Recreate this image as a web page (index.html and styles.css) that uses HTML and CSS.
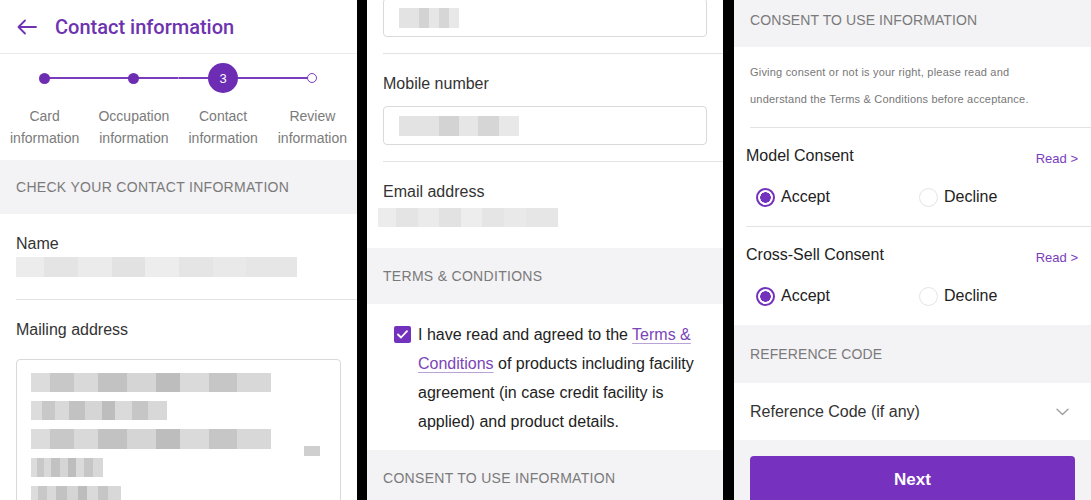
FILE: index.html
```html
<!DOCTYPE html>
<html lang="en">
<head>
    <meta charset="UTF-8">
    <meta name="viewport" content="width=device-width, initial-scale=1.0">
    <title>Contact information</title>
    <link rel="stylesheet" href="styles.css">
</head>
<body>
    <!-- screen 1 -->
    <section class="panel">
        <header class="topbar">
            <svg class="back" width="20" height="16" viewBox="0 0 20 16">
                <path d="M19 8H2M8 1.5L1.5 8L8 14.5" fill="none" stroke="#6d33b0" stroke-width="1.8" stroke-linecap="round" stroke-linejoin="round"/>
            </svg>
            <h1>Contact information</h1>
        </header>

        <div class="stepper">
            <div class="step first done">
                <div class="rail"><span class="dot"></span></div>
                <div class="step-label">Card<br>information</div>
            </div>
            <div class="step done">
                <div class="rail"><span class="dot"></span></div>
                <div class="step-label">Occupation<br>information</div>
            </div>
            <div class="step current">
                <div class="rail"><span class="num">3</span></div>
                <div class="step-label">Contact<br>information</div>
            </div>
            <div class="step last">
                <div class="rail"><span class="dot empty"></span></div>
                <div class="step-label">Review<br>information</div>
            </div>
        </div>

        <div class="section-head">CHECK YOUR CONTACT INFORMATION</div>

        <div class="field name-field">
            <div class="label">Name</div>
            <div class="mosaic light name-mask"></div>
        </div>

        <div class="field mail-field">
            <div class="label">Mailing address</div>
            <div class="box address-box">
                <div class="mosaic dark w240"></div>
                <div class="mosaic dark w136"></div>
                <div class="mosaic dark w240"></div>
                <div class="mosaic dark w72"></div>
                <div class="mosaic dark w90"></div>
                <span class="mosaic dark speck"></span>
            </div>
        </div>
    </section>

    <!-- screen 2 -->
    <section class="panel">
        <div class="field cut-field">
            <div class="box input-box"><div class="mosaic mid w60"></div></div>
        </div>

        <div class="field">
            <div class="label">Mobile number</div>
            <div class="box input-box"><div class="mosaic mid w120"></div></div>
        </div>

        <div class="field email-field">
            <div class="label">Email address</div>
            <div class="mosaic light email-mask"></div>
        </div>

        <div class="section-head tall">TERMS &amp; CONDITIONS</div>

        <div class="agree">
            <span class="checkbox">
                <svg width="11" height="9" viewBox="0 0 11 9">
                    <path d="M1 4.5L4 7.5L10 1.2" fill="none" stroke="#fff" stroke-width="1.8" stroke-linecap="round" stroke-linejoin="round"/>
                </svg>
            </span>
            <p>I have read and agreed to the <a href="#">Terms &amp;</a><br><a href="#">Conditions</a> of products including facility<br>agreement (in case credit facility is<br>applied) and product details.</p>
        </div>

        <div class="section-head tall">CONSENT TO USE INFORMATION</div>
    </section>

    <!-- screen 3 -->
    <section class="panel">
        <div class="section-head cut">CONSENT TO USE INFORMATION</div>

        <p class="consent-note">Giving consent or not is your right, please read and understand the Terms &amp; Conditions before acceptance.</p>

        <div class="consent">
            <div class="consent-title">
                <span>Model Consent</span>
                <a href="#" class="read">Read &gt;</a>
            </div>
            <div class="choices">
                <label class="choice"><span class="radio on"></span>Accept</label>
                <label class="choice"><span class="radio"></span>Decline</label>
            </div>
        </div>

        <div class="consent last">
            <div class="consent-title">
                <span>Cross-Sell Consent</span>
                <a href="#" class="read">Read &gt;</a>
            </div>
            <div class="choices">
                <label class="choice"><span class="radio on"></span>Accept</label>
                <label class="choice"><span class="radio"></span>Decline</label>
            </div>
        </div>

        <div class="section-head ref-head">REFERENCE CODE</div>

        <div class="select-row">
            <span>Reference Code (if any)</span>
            <svg width="13" height="8" viewBox="0 0 13 8">
                <path d="M1 1.2L6.5 6.5L12 1.2" fill="none" stroke="#a0a0a0" stroke-width="1.4" stroke-linecap="round" stroke-linejoin="round"/>
            </svg>
        </div>

        <div class="footer">
            <button type="button">Next</button>
        </div>
    </section>
</body>
</html>
```

FILE: styles.css
```css
body {
    margin: 0;
    height: 500px;
    display: flex;
    gap: 10px;
    background-color: #000;
    font-family: "Liberation Sans", Arial, sans-serif;
    color: #2b2b2b;
    overflow: hidden;
}
.panel {
    width: 357px;
    height: 500px;
    flex: none;
    background-color: #fff;
    overflow: hidden;
    display: flex;
    flex-direction: column;
}
.panel:nth-child(2) {
    width: 356px;
    margin-right: 1px;
}

/* header */
.topbar {
    height: 53px;
    display: flex;
    align-items: center;
    gap: 18px;
    padding: 0 0 0 17px;
    border-bottom: 1px solid #ececee;
    flex: none;
}
.topbar h1 {
    margin: 0;
    font-family: Roboto, "Liberation Sans", sans-serif;
    font-weight: 500;
    font-size: 20px;
    color: #6d33b0;
    letter-spacing: 0;
}

/* stepper */
.stepper {
    display: grid;
    grid-template-columns: repeat(4, 1fr);
    padding: 9px 0 11px;
    flex: none;
}
.step {
    display: flex;
    flex-direction: column;
    align-items: center;
}
.rail {
    width: 100%;
    height: 30px;
    display: flex;
    justify-content: center;
    align-items: center;
    background: linear-gradient(#7a3bbd, #7a3bbd) center / 100% 2px no-repeat;
}
.step.first .rail {
    background-size: 50% 2px;
    background-position: right center;
}
.step.last .rail {
    background-size: 50% 2px;
    background-position: left center;
}
.dot {
    width: 11px;
    height: 11px;
    border-radius: 50%;
    background-color: #6d2db3;
}
.dot.empty {
    width: 8px;
    height: 8px;
    background-color: #fff;
    border: 1.5px solid #7a3bbd;
}
.num {
    width: 30px;
    height: 30px;
    border-radius: 50%;
    background-color: #6c2cb4;
    color: #fff;
    font-size: 13px;
    display: flex;
    align-items: center;
    justify-content: center;
}
.step-label {
    margin-top: 12px;
    font-size: 14px;
    line-height: 22px;
    color: #7b7b7b;
    text-align: center;
}

/* section headings */
.section-head {
    height: 54px;
    flex: none;
    display: flex;
    align-items: center;
    padding-left: 16px;
    background-color: #f3f2f5;
    font-size: 14px;
    color: #7a7a7a;
    letter-spacing: 0.3px;
}
.section-head.tall {
    height: 56px;
}
.section-head.cut {
    margin-top: -8px;
    height: 55px;
    letter-spacing: 0.1px;
}
.section-head.ref-head {
    height: 58px;
    letter-spacing: 0.1px;
}

/* fields */
.field {
    margin-left: 16px;
    padding: 20px 16px 16px 0;
    border-bottom: 1px solid #e3e3e6;
    flex: none;
}
.label {
    font-size: 16px;
    line-height: 20px;
    color: #333;
}
.name-field {
    padding-bottom: 22px;
}
.name-mask {
    margin-top: 3px;
    width: 281px;
    height: 20px;
}
.mail-field {
    border-bottom: none;
    padding-top: 20px;
}
.box {
    border: 1px solid #d9d9dc;
    border-radius: 4px;
    box-sizing: border-box;
}
.address-box {
    margin-top: 19px;
    height: 160px;
    padding: 13px 14px;
    display: flex;
    flex-direction: column;
    gap: 9px;
    position: relative;
}
.address-box .mosaic {
    height: 20px;
}
.input-box {
    height: 39px;
    padding: 0 15px;
    display: flex;
    align-items: center;
}
.cut-field {
    margin-top: -2px;
    padding-top: 0;
}
.field:nth-child(2) .input-box {
    margin-top: 12px;
}
.email-field {
    border-bottom: none;
    padding-bottom: 21px;
}
.email-mask {
    margin-left: -5px;
    margin-top: 6px;
    width: 180px;
    height: 19px;
}

/* pixelated placeholders for hidden data */
.mosaic {
    display: block;
}
.mosaic.light {
    background: linear-gradient(90deg,
        #ececec 0 10%, #e4e4e4 10% 22%, #ebebeb 22% 34%, #e2e2e2 34% 46%,
        #ededed 46% 58%, #e5e5e5 58% 70%, #e9e9e9 70% 82%, #e6e6e6 82% 100%);
}
.mosaic.mid {
    height: 20px;
    background: linear-gradient(90deg,
        #e3e3e3 0 33%, #d3d3d3 33% 50%, #e6e6e6 50% 66%, #d6d6d6 66% 83%, #e8e8e8 83% 100%);
}
.mosaic.dark {
    background: linear-gradient(90deg,
        #dcdcdc 0 8%, #c8c8c8 8% 18%, #d9d9d9 18% 28%, #c2c2c2 28% 40%,
        #d5d5d5 40% 52%, #bdbdbd 52% 62%, #dadada 62% 74%, #c6c6c6 74% 86%, #d8d8d8 86% 100%);
}
.w240 { width: 240px; }
.w136 { width: 136px; }
.w72 { width: 72px; }
.w90 { width: 90px; }
.w60 { width: 60px; }
.w120 { width: 120px; }
.mosaic.speck {
    position: absolute;
    left: 287px;
    top: 86px;
    width: 16px;
    height: 10px;
    background: #cfcfcf;
}

/* terms */
.agree {
    display: flex;
    gap: 7px;
    padding: 16px 10px 14px 27px;
    flex: none;
}
.checkbox {
    flex: none;
    width: 17px;
    height: 17px;
    margin-top: 6px;
    border-radius: 2px;
    background-color: #7232bd;
    display: flex;
    align-items: center;
    justify-content: center;
}
.agree p {
    margin: 0;
    font-size: 16px;
    line-height: 29px;
    color: #222;
}
.agree a {
    color: #7a45b8;
    text-decoration: underline;
    text-decoration-color: #b9a2d6;
    text-underline-offset: 3px;
}

/* consent */
.consent-note {
    margin: 0 0 0 16px;
    padding: 12px 40px 14px 0;
    font-size: 11px;
    line-height: 27px;
    color: #777;
    letter-spacing: 0.2px;
    border-bottom: 1px solid #e3e3e6;
    flex: none;
}
.consent {
    margin-left: 12px;
    padding: 17px 13px 19px 0;
    border-bottom: 1px solid #e3e3e6;
    flex: none;
}
.consent.last {
    border-bottom: none;
    padding-top: 17px;
}
.consent-title {
    display: flex;
    justify-content: space-between;
    align-items: flex-end;
    height: 22px;
    font-size: 16px;
    line-height: 22px;
    color: #222;
}
.read {
    font-size: 13px;
    line-height: 16px;
    color: #7a3cbd;
    text-decoration: none;
}
.choices {
    display: grid;
    grid-template-columns: 163px 1fr;
    padding: 20px 0 0 10px;
}
.choice {
    display: flex;
    align-items: center;
    gap: 6px;
    font-size: 16px;
    line-height: 20px;
    color: #222;
}
.radio {
    width: 19px;
    height: 19px;
    box-sizing: border-box;
    border-radius: 50%;
    border: 1px solid #e4e4e6;
    background-color: #fff;
}
.radio.on {
    border: 2px solid #7232bd;
    background: radial-gradient(circle, #7232bd 0 5px, #fff 5.5px);
}

/* reference code */
.select-row {
    height: 57px;
    flex: none;
    display: flex;
    align-items: center;
    justify-content: space-between;
    padding: 0 22px 0 16px;
    font-size: 16px;
    color: #333;
}
.footer {
    flex: 1;
    background-color: #f3f2f5;
    padding: 16px 16px 0;
}
.footer button {
    width: 100%;
    height: 48px;
    border: none;
    border-radius: 4px;
    background-color: #7631bf;
    color: #fff;
    font-family: "Liberation Sans", Arial, sans-serif;
    font-weight: bold;
    font-size: 17px;
    cursor: pointer;
    padding-bottom: 2px;
}
```
